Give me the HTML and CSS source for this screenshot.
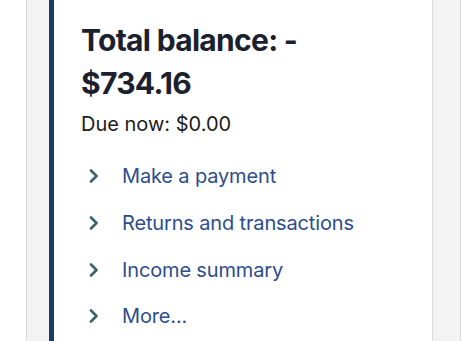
FILE: index.html
```html
<!DOCTYPE html>
<html lang="en">

<head>
    <meta charset="UTF-8">
    <meta name="viewport" content="width=device-width, initial-scale=1.0">
    <title>Balance</title>
    <link rel="stylesheet" href="styles.css">
</head>

<body>
    <div class="page">
        <div class="gutter"></div>
        <div class="card">
            <h1 class="total">Total balance: -<br>$734.16</h1>
            <p class="due">Due now: $0.00</p>
            <ul class="links">
                <li><span class="chev"><svg width="10" height="14" viewBox="0 0 10 14"><path d="M2 1.5 L7.5 7 L2 12.5" /></svg></span><a href="#">Make a payment</a></li>
                <li><span class="chev"><svg width="10" height="14" viewBox="0 0 10 14"><path d="M2 1.5 L7.5 7 L2 12.5" /></svg></span><a href="#">Returns and transactions</a></li>
                <li><span class="chev"><svg width="10" height="14" viewBox="0 0 10 14"><path d="M2 1.5 L7.5 7 L2 12.5" /></svg></span><a href="#">Income summary</a></li>
                <li><span class="chev"><svg width="10" height="14" viewBox="0 0 10 14"><path d="M2 1.5 L7.5 7 L2 12.5" /></svg></span><a href="#">More...</a></li>
            </ul>
        </div>
        <div class="gutter right"></div>
    </div>
</body>

</html>
```
FILE: styles.css
```css
body {
    margin: 0;
    background-color: #ffffff;
    font-family: Inter, "Noto Sans", sans-serif;
}

.page {
    display: flex;
    height: 341px;
    padding-left: 26px;
    padding-right: 13px;
}

.gutter {
    width: 22px;
    background-color: #f3f3f3;
    border-left: 1px solid #dadada;
}

.gutter.right {
    width: 27px;
    border-right: 1px solid #dadada;
}

.card {
    flex: 1;
    background-color: #ffffff;
    border-left: 5px solid #1f3c63;
    padding: 19px 0 0 27px;
}

.total {
    margin: 0;
    font-size: 30px;
    line-height: 43px;
    font-weight: 700;
    letter-spacing: -0.7px;
    color: #1b1f2e;
}

.due {
    margin: 5px 0 0 0;
    font-size: 20px;
    line-height: 28px;
    color: #1c1c1c;
}

.links {
    list-style: none;
    margin: 15px 0 0 0;
    padding: 0;
}

.links li {
    display: flex;
    align-items: center;
    height: 46.7px;
    font-size: 20px;
}

.chev {
    width: 33px;
    padding-left: 8px;
    display: flex;
    align-items: center;
}

.chev path {
    fill: none;
    stroke: #3b6370;
    stroke-width: 2.6;
    stroke-linecap: round;
    stroke-linejoin: round;
}

.links a {
    color: #2c4d8e;
    letter-spacing: -0.15px;
    text-decoration: none;
}
```
